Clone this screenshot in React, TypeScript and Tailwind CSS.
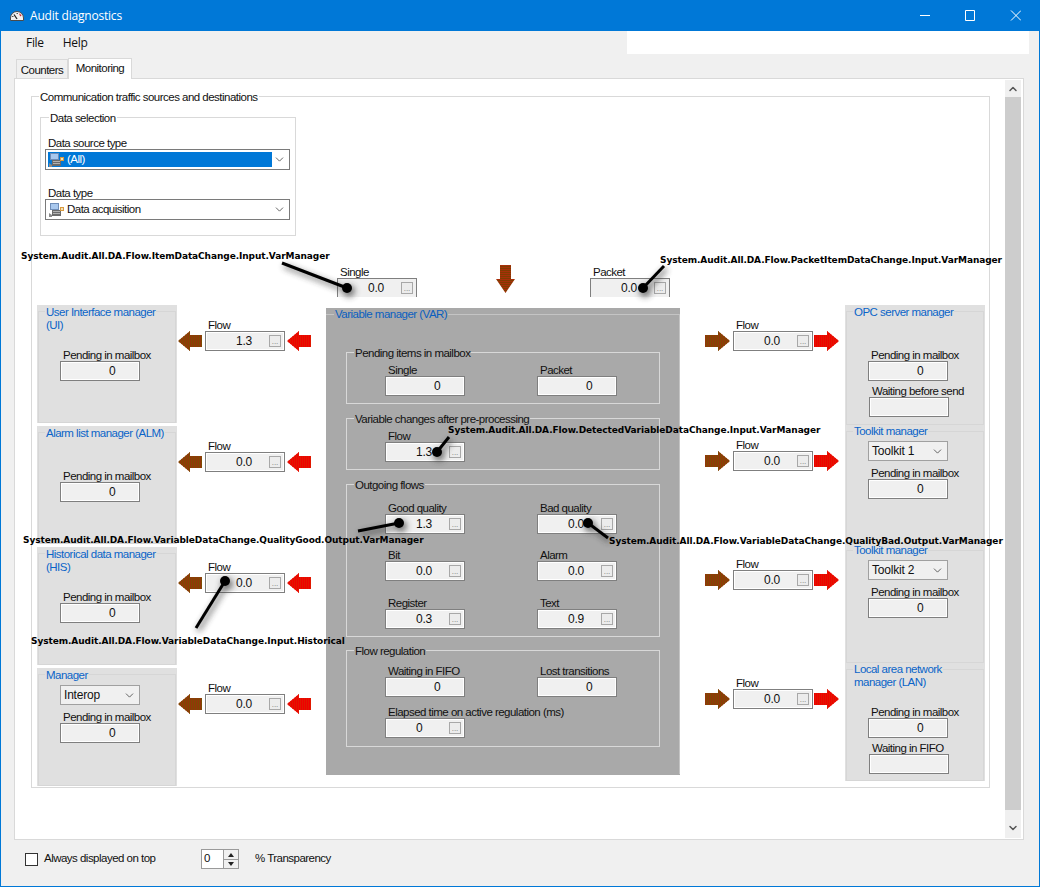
import React from "react";
import { ChevronDown, ChevronUp } from "lucide-react";

const ui = "font-['Liberation_Sans',sans-serif] text-[11.5px] tracking-[-0.52px] text-[#111]";

const Arrow: React.FC<{ dir: "left" | "right"; brown?: boolean; className?: string }> = ({ dir, brown, className }) => {
  const id = "arrow" + React.useId().replace(/[^a-zA-Z0-9]/g, "");
  return (
    <svg
      viewBox={dir === "left" ? "0 0 24 20" : "0 0 25 20"}
      className={`h-[20px] shrink-0 ${dir === "left" ? "w-[24px]" : "w-[25px]"} ${className ?? ""}`}
    >
      <defs>
        <clipPath id={id}>
          <path d={dir === "left" ? "M0 10 12 0V4H24V16H12V20Z" : "M25 10 13 0V4H0V16H13V20Z"} />
        </clipPath>
      </defs>
      <g clipPath={`url(#${id})`}>
        <rect width="25" height="20" fill={brown ? "#94340a" : "#f00000"} />
        <path d="M1 10H25" stroke={brown ? "#7e4a02" : "#e01800"} strokeWidth="20" strokeDasharray="1 1" />
      </g>
    </svg>
  );
};

const Field: React.FC<{
  value?: string;
  button?: boolean;
  clipped?: boolean;
  className?: string;
}> = ({ value, button, clipped, className }) => (
  <div
    className={`flex w-[80px] items-center justify-between border border-[#7f7f7f] bg-[#f0f0f0] shadow-[inset_0_0_0_1px_#fff] text-[12px] tracking-[-0.2px] ${
      clipped ? "h-[19px] border-b-0 shadow-none" : "h-[20px]"
    } ${button ? "pl-[30px] pr-[3px]" : "pl-[48px]"} ${className ?? ""}`}
  >
    <span className="leading-none">{value}</span>
    {button && (
      <span className="flex h-[12px] w-[12px] items-end justify-center border border-[#a8a8a8] bg-[#ececec] text-[8px] leading-[9px] tracking-normal text-[#777]">
        ...
      </span>
    )}
  </div>
);

const Labeled: React.FC<{
  label: string;
  value?: string;
  button?: boolean;
  clipped?: boolean;
  className?: string;
}> = ({ label, value, button, clipped, className }) => (
  <div className={`w-[80px] ${className ?? ""}`}>
    <div className="h-[13px] whitespace-nowrap pl-[3px] leading-[15px]">{label}</div>
    <Field value={value} button={button} clipped={clipped} />
  </div>
);

const Combo: React.FC<{ label: string }> = ({ label }) => (
  <div className="flex h-[20px] w-[80px] items-center justify-between border border-[#a0a0a0] bg-[#f0f0f0] pl-[3px] pr-[3px] text-[12px] tracking-[-0.2px]">
    <span>{label}</span>
    <ChevronDown size={13} strokeWidth={1.5} className="text-[#444]" />
  </div>
);

// Legend and border of the light gray manager boxes
const Manager: React.FC<{
  legend: string[];
  className: string;
  height: string;
  legendTop?: string;
  children: React.ReactNode;
}> = ({ legend, className, height, legendTop = "top-[1px]", children }) => (
  <div className={`relative w-[140px] shrink-0 bg-[#e0e0e0] px-[1px] pt-[6px] ${height}`}>
    <div className={`h-full border border-[#d6d6d6] pl-[21px] ${className}`}>{children}</div>
    <div className={`absolute left-[8px] bg-[#e0e0e0] px-[1px] leading-[13px] text-[#0a64c8] ${legendTop}`}>
      {legend.map((line) => (
        <div key={line}>{line}</div>
      ))}
    </div>
  </div>
);

const LeftRow: React.FC<{ value: string; children: React.ReactNode }> = ({ value, children }) => (
  <div className="flex items-start">
    {children}
    <div className="ml-[1px] mt-[13px] flex h-[33px] items-end">
      <Arrow dir="left" brown />
      <Labeled label="Flow" value={value} button className="ml-[3px]" />
      <Arrow dir="left" className="ml-[2px]" />
    </div>
  </div>
);

const RightRow: React.FC<{ value: string; children: React.ReactNode }> = ({ value, children }) => (
  <div className="flex items-start">
    <div className="mt-[13px] flex h-[33px] items-end">
      <Arrow dir="right" brown />
      <Labeled label="Flow" value={value} button className="ml-[3px]" />
      <Arrow dir="right" className="ml-[1px]" />
    </div>
    <div className="ml-[6px]">{children}</div>
  </div>
);

const SubGroup: React.FC<{ legend: string; className: string; children: React.ReactNode }> = ({
  legend,
  className,
  children,
}) => (
  <div className={`relative mx-[20px] w-[314px] border border-[#d8d8d8] pl-[38px] ${className}`}>
    <div className="absolute -top-[6px] left-[7px] whitespace-nowrap bg-[#a9a9a9] px-[1px] leading-[13px]">{legend}</div>
    {children}
  </div>
);

const Pair: React.FC<{ children: React.ReactNode; className?: string }> = ({ children, className }) => (
  <div className={`flex gap-[72px] ${className ?? ""}`}>{children}</div>
);

const ServerIcon = () => (
  <svg viewBox="0 0 16 16" className="h-[16px] w-[16px] shrink-0">
    <path fill="#6f8db8" d="M1 1h9v7H1z" />
    <path fill="#a9c8ee" d="M2 2h7v5H2z" />
    <path fill="#6a6a6a" d="M3 8h9v6H3z" />
    <path fill="#b0b0b0" d="M4 9h7v1H4zM4 11h7v1H4z" />
    <path fill="#d99a3e" d="M11 5h4v4h-4z" />
    <path fill="#f4e2b8" d="M12 6h2v2h-2z" />
    <path fill="#8a8a8a" d="M0 11l3 2v2H0z" />
  </svg>
);

const GaugeIcon = () => (
  <svg viewBox="0 0 14 10" className="h-[10px] w-[14px]">
    <path fill="#f2f2f2" stroke="#4a4a4a" strokeWidth="1" d="M.5 9.5V7a6.5 6.5 0 0 1 13 0v2.5z" />
    <path fill="#d22" d="M9 2.2l2.6 2-1.4 1.4z" />
    <path stroke="#222" strokeWidth="1.3" d="M7 8 4 3.5" />
    <path fill="#555" d="M2 5h1.5v1H2zM6.5 2H8v1H6.5z" />
  </svg>
);

const callouts = [
  { text: "System.Audit.All.DA.Flow.ItemDataChange.Input.VarManager", pos: "left-[20px] top-[251px]" },
  { text: "System.Audit.All.DA.Flow.PacketItemDataChange.Input.VarManager", pos: "left-[659px] top-[255px]" },
  { text: "System.Audit.All.DA.Flow.DetectedVariableDataChange.Input.VarManager", pos: "left-[447px] top-[425px]" },
  { text: "System.Audit.All.DA.Flow.VariableDataChange.QualityGood.Output.VarManager", pos: "left-[22px] top-[535px]" },
  { text: "System.Audit.All.DA.Flow.VariableDataChange.QualityBad.Output.VarManager", pos: "left-[608px] top-[536px]" },
  { text: "System.Audit.All.DA.Flow.VariableDataChange.Input.Historical", pos: "left-[30px] top-[636px]" },
];

const leaders = [
  [281, 263, 346, 288],
  [663, 266, 642, 288],
  [448, 437, 436, 452],
  [357, 531, 398, 523],
  [607, 538, 587, 523],
  [195, 628, 224, 581],
];

const Callouts = () => (
  <>
    <svg className="pointer-events-none absolute left-0 top-0 h-[887px] w-[1040px]" viewBox="0 0 1040 887">
      <defs>
        <filter id="soft" x="-50%" y="-50%" width="200%" height="200%">
          <feGaussianBlur stdDeviation="3" />
        </filter>
      </defs>
      {leaders.map(([x1, y1, x2, y2]) => (
        <g key={x1}>
          <g filter="url(#soft)" opacity="0.65" transform="translate(2 3)">
            <line x1={x1} y1={y1} x2={x2} y2={y2} stroke="#333" strokeWidth="4" />
            <circle cx={x2} cy={y2} r="6" fill="#333" />
          </g>
          <line x1={x1} y1={y1} x2={x2} y2={y2} stroke="#000" strokeWidth="3" />
          <circle cx={x2} cy={y2} r="5" fill="#000" />
        </g>
      ))}
    </svg>
    {callouts.map((c) => (
      <div
        key={c.text}
        className={`absolute whitespace-nowrap font-['DejaVu_Sans',sans-serif] text-[9px] font-bold leading-[11px] tracking-[-0.08px] text-black ${c.pos}`}
      >
        {c.text}
      </div>
    ))}
  </>
);

const App: React.FC = () => {
  return (
    <div className={`relative flex h-[887px] w-[1040px] flex-col overflow-hidden border-x border-b border-[#0078d7] bg-[#f0f0f0] ${ui}`}>
      {/* title bar */}
      <div className="-mx-[1px] flex h-[31px] shrink-0 items-center bg-[#0078d7] pl-[10px] text-white">
        <GaugeIcon />
        <span className="ml-[6px] font-['Open_Sans',sans-serif] text-[12px] tracking-[-0.2px] text-white">Audit diagnostics</span>
        <svg viewBox="0 0 101 11" className="ml-auto mr-[19px] h-[11px] w-[101px]" fill="none" stroke="#fff">
          <path d="M0 5.5H10" />
          <path d="M45.5 .5h9v10h-9z" />
          <path d="M91 .5l10 10M101 .5 91 10.5" />
        </svg>
      </div>

      {/* menu */}
      <div className="flex h-[23px] shrink-0 items-center pl-[25px] font-['Open_Sans',sans-serif] text-[12px] tracking-[-0.3px]">
        <span>File</span>
        <span className="ml-[19px]">Help</span>
        <div className="ml-auto mr-[10px] h-[23px] w-[402px] bg-white" />
      </div>

      {/* tabs */}
      <div className="mt-[4px] flex h-[20px] shrink-0 items-end pl-[15px]">
        <div className="flex h-[19px] w-[52px] items-center justify-center border border-b-0 border-[#d9d9d9] bg-[#f0f0f0] pt-[3px]">Counters</div>
        <div className="z-10 -mb-[1px] flex h-[21px] w-[64px] items-center justify-center border border-b-0 border-[#d9d9d9] bg-white pb-[1px]">Monitoring</div>
      </div>

      {/* tab page */}
      <div className="ml-[13px] flex h-[762px] w-[1010px] shrink-0 border border-[#d9d9d9] bg-white">
        <div className="w-[991px] pl-[16px] pt-[17px]">
          <div className="relative h-[692px] w-[959px] border border-[#d9d9d9] pl-[5px] pt-[20px]">
            <div className="absolute -top-[6px] left-[7px] bg-white px-[1px] leading-[13px]">Communication traffic sources and destinations</div>

            <div className="relative ml-[3px] h-[119px] w-[256px] border border-[#d9d9d9] pl-[4px] pt-[18px]">
              <div className="absolute -top-[6px] left-[8px] bg-white px-[1px] leading-[13px]">Data selection</div>
              <div className="h-[13px] pl-[3px] leading-[15px]">Data source type</div>
              <div className="flex h-[21px] w-[245px] items-center border border-[#7a7a7a] bg-white pl-[2px] pr-[2px]">
                <div className="flex h-[15px] w-[224px] items-center bg-[#0078d7] pl-[1px] text-white">
                  <ServerIcon />
                  <span className="ml-[2px] text-white">(All)</span>
                </div>
                <ChevronDown size={13} strokeWidth={1.5} className="ml-auto mr-[1px] text-[#444]" />
              </div>
              <div className="mt-[16px] h-[13px] pl-[3px] leading-[15px]">Data type</div>
              <div className="flex h-[21px] w-[245px] items-center border border-[#7a7a7a] bg-white pl-[3px] pr-[2px]">
                <ServerIcon />
                <span className="ml-[2px]">Data acquisition</span>
                <ChevronDown size={13} strokeWidth={1.5} className="ml-auto mr-[1px] text-[#444]" />
              </div>
            </div>

            <div className="mt-[29px] flex">
              {/* left managers */}
              <div className="mt-[40px] flex w-[289px] flex-col gap-[3px]">
                <LeftRow value="1.3">
                  <Manager legend={["User Interface manager", "(UI)"]} height="h-[118px]" className="pt-[36px]">
                    <Labeled label="Pending in mailbox" value="0" />
                  </Manager>
                </LeftRow>
                <LeftRow value="0.0">
                  <Manager legend={["Alarm list manager (ALM)"]} height="h-[118px]" className="pt-[36px]">
                    <Labeled label="Pending in mailbox" value="0" />
                  </Manager>
                </LeftRow>
                <LeftRow value="0.0">
                  <Manager legend={["Historical data manager", "(HIS)"]} height="h-[118px]" className="pt-[36px]">
                    <Labeled label="Pending in mailbox" value="0" />
                  </Manager>
                </LeftRow>
                <LeftRow value="0.0">
                  <Manager legend={["Manager"]} height="h-[118px]" className="pt-[10px]">
                    <Combo label="Interop" />
                    <div className="mt-[5px]">
                      <Labeled label="Pending in mailbox" value="0" />
                    </div>
                  </Manager>
                </LeftRow>
              </div>

              {/* variable manager */}
              <div className="w-[354px] shrink-0">
                <div className="flex h-[43px] pl-[11px]">
                  <Labeled label="Single" value="0.0" button clipped className="mt-[-2px] self-end pb-[11px]" />
                  <svg viewBox="0 0 19 28" className="ml-[79px] h-[28px] w-[19px]">
                    <defs>
                      <pattern id="stripe-down" width="2" height="2" patternUnits="userSpaceOnUse">
                        <rect width="2" height="1" fill="#a8300a" />
                        <rect y="1" width="2" height="1" fill="#803c00" />
                      </pattern>
                    </defs>
                    <path fill="url(#stripe-down)" d="M4 0H15V14H19L9.5 28 0 14H4Z" />
                  </svg>
                  <Labeled label="Packet" value="0.0" button clipped className="ml-[75px] self-end pb-[11px]" />
                </div>
                <div className="relative h-[467px] bg-[#a9a9a9] pt-[6px]">
                  <div className="h-[460px] border-t border-r border-[#c4c4c4]">
                    <div className="absolute left-[8px] top-0 bg-[#a9a9a9] px-[1px] leading-[13px] text-[#0a5fc0]">Variable manager (VAR)</div>
                    <SubGroup legend="Pending items in mailbox" className="mt-[37px] h-[52px] pt-[10px]">
                      <Pair>
                        <Labeled label="Single" value="0" />
                        <Labeled label="Packet" value="0" />
                      </Pair>
                    </SubGroup>
                    <SubGroup legend="Variable changes after pre-processing" className="mt-[14px] h-[52px] pt-[10px]">
                      <Labeled label="Flow" value="1.3" button />
                    </SubGroup>
                    <SubGroup legend="Outgoing flows" className="mt-[14px] h-[153px] pt-[16px]">
                      <Pair>
                        <Labeled label="Good quality" value="1.3" button />
                        <Labeled label="Bad quality" value="0.0" button />
                      </Pair>
                      <Pair className="mt-[14px]">
                        <Labeled label="Bit" value="0.0" button />
                        <Labeled label="Alarm" value="0.0" button />
                      </Pair>
                      <Pair className="mt-[15px]">
                        <Labeled label="Register" value="0.3" button />
                        <Labeled label="Text" value="0.9" button />
                      </Pair>
                    </SubGroup>
                    <SubGroup legend="Flow regulation" className="mt-[13px] h-[97px] pt-[13px]">
                      <Pair>
                        <Labeled label="Waiting in FIFO" value="0" />
                        <Labeled label="Lost transitions" value="0" />
                      </Pair>
                      <Labeled label="Elapsed time on active regulation (ms)" value="0" button className="mt-[8px]" />
                    </SubGroup>
                  </div>
                </div>
              </div>

              {/* right managers */}
              <div className="ml-[25px] mt-[40px] flex w-[280px] flex-col">
                <RightRow value="0.0">
                  <Manager legend={["OPC server manager"]} height="h-[120px]" className="pt-[36px]">
                    <Labeled label="Pending in mailbox" value="0" />
                    <Labeled label="Waiting before send" className="ml-[1px] mt-[3px]" />
                  </Manager>
                </RightRow>
                <RightRow value="0.0">
                  <Manager legend={["Toolkit manager"]} height="h-[119px]" legendTop="top-0" className="pt-[9px]">
                    <Combo label="Toolkit 1" />
                    <div className="mt-[5px]">
                      <Labeled label="Pending in mailbox" value="0" />
                    </div>
                  </Manager>
                </RightRow>
                <RightRow value="0.0">
                  <Manager legend={["Toolkit manager"]} height="h-[119px]" legendTop="top-0" className="pt-[9px]">
                    <Combo label="Toolkit 2" />
                    <div className="mt-[5px]">
                      <Labeled label="Pending in mailbox" value="0" />
                    </div>
                  </Manager>
                </RightRow>
                <RightRow value="0.0">
                  <Manager legend={["Local area network", "manager (LAN)"]} height="h-[118px]" legendTop="top-0" className="pt-[35px]">
                    <Labeled label="Pending in mailbox" value="0" />
                    <Labeled label="Waiting in FIFO" className="ml-[1px] mt-[3px]" />
                  </Manager>
                </RightRow>
              </div>
            </div>
          </div>
        </div>

        {/* scrollbar */}
        <div className="my-[1px] ml-[-1px] flex h-[758px] w-[16px] flex-col bg-[#f0f0f0]">
          <div className="flex h-[17px] items-center justify-center text-[#555]">
            <ChevronUp size={12} strokeWidth={3} />
          </div>
          <div className="h-[713px] bg-[#cdcdcd]" />
          <div className="flex h-[27px] items-center justify-center pt-[9px] text-[#555]">
            <ChevronDown size={12} strokeWidth={3} />
          </div>
        </div>
      </div>

      {/* footer */}
      <div className="mt-[8px] flex h-[22px] items-center pl-[24px]">
        <div className="h-[13px] w-[13px] border border-[#333] bg-white" />
        <span className="ml-[6px] w-[112px] whitespace-nowrap">Always displayed on top</span>
        <div className="ml-[45px] flex h-[20px] w-[38px] items-center border border-[#9a9a9a] bg-white pl-[2px]">
          <span>0</span>
          <div className="ml-auto flex h-full w-[15px] flex-col border-l border-[#9a9a9a]">
            <div className="flex h-1/2 items-center justify-center bg-[#f0f0f0]">
              <div className="h-0 w-0 border-x-[3px] border-b-[4px] border-x-transparent border-b-[#222]" />
            </div>
            <div className="flex h-1/2 items-center justify-center border-t border-[#9a9a9a] bg-[#f0f0f0]">
              <div className="h-0 w-0 border-x-[3px] border-t-[4px] border-x-transparent border-t-[#222]" />
            </div>
          </div>
        </div>
        <span className="ml-[16px]">% Transparency</span>
      </div>

      <Callouts />
    </div>
  );
};

export default App;
